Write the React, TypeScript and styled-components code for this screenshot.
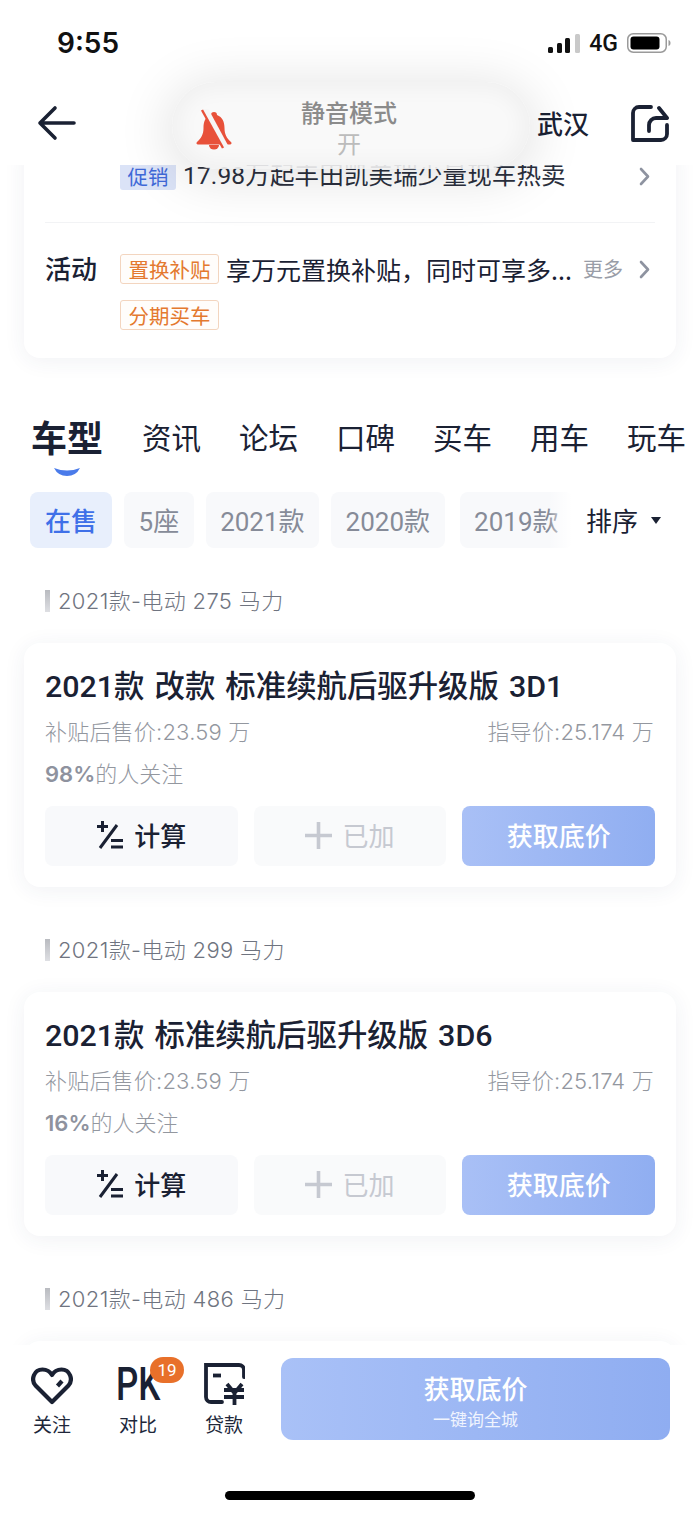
import React from "react";
import styled, { createGlobalStyle } from "styled-components";

const CJK = `"Noto Sans CJK SC", sans-serif`;
const LATIN = `Roboto, "Noto Sans CJK SC", sans-serif`;
const INTER = `Inter, "Noto Sans CJK SC", sans-serif`;
const INK = "#1a2133";

const Global = createGlobalStyle`
  * { box-sizing: border-box; }
  html, body { margin: 0; padding: 0; background: #fff; }
  body { font-family: ${CJK}; color: ${INK}; }
`;

const Page = styled.div`
  position: relative;
  width: 700px;
  height: 1515px;
  display: flex;
  flex-direction: column;
  overflow: hidden;
  background: #fff;
`;

const Header = styled.header`
  flex: none;
  height: 165px;
  background: #fff;
  position: relative;
  z-index: 2;
`;

const StatusBar = styled.div`
  height: 86px;
  display: flex;
  align-items: center;
  justify-content: space-between;
  padding: 0 29px 0 57px;
`;

const Time = styled.span`
  font: 600 28px/1 ${INTER};
  color: #111;
`;

const StatusRight = styled.div`
  display: flex;
  align-items: center;
  gap: 9px;
`;

const Carrier = styled.span`
  font: 500 23px/1 ${LATIN};
  color: #111;
`;

const NavBar = styled.nav`
  height: 74px;
  display: flex;
  align-items: center;
  padding: 0 31px 0 37px;
`;

const City = styled.span`
  margin-left: auto;
  margin-right: 42px;
  font: 500 26px/1 ${CJK};
`;

const Toast = styled.div`
  position: absolute;
  z-index: 5;
  left: 172px;
  top: 82px;
  width: 358px;
  height: 87px;
  border-radius: 44px;
  background: rgba(248, 248, 248, 0.9);
  box-shadow: 0 6px 50px 8px rgba(0, 0, 0, 0.1), inset 0 0 20px 8px rgba(0, 0, 0, 0.035);
  display: flex;
  align-items: center;
`;

const ToastBell = styled.span`
  display: flex;
  margin-left: 24px;
  margin-top: 8px;
`;

const ToastText = styled.div`
  flex: 1;
  margin-left: 3px;
  margin-right: 67px;
  text-align: center;
`;

const ToastTitle = styled.div`
  font: 500 24px/32px ${CJK};
  color: #8b8b8b;
  margin-top: 2px;
`;

const ToastState = styled.div`
  font: 400 24px/30px ${CJK};
  color: #bcbcbc;
`;

const Scroller = styled.main`
  flex: 1;
  min-height: 0;
  overflow: hidden;
`;

const Card = styled.section`
  margin: 0 24px;
  background: #fff;
  border-radius: 16px;
  box-shadow: 0 3px 22px rgba(40, 60, 100, 0.07);
  padding: 0 21px;
`;

const InfoCard = styled(Card)`
  margin-top: -30px;
  padding-top: 27px;
  padding-bottom: 28px;
`;

const PromoRow = styled.div`
  display: flex;
  align-items: center;
  height: 28px;
  padding-left: 75px;
  padding-right: 5px;
`;

const Tag = styled.span<{ $tone: "blue" | "orange" }>`
  flex: none;
  display: inline-flex;
  align-items: center;
  justify-content: center;
  border-radius: 3px;
  font: 400 20.5px/1 ${CJK};
  ${(p) =>
    p.$tone === "blue"
      ? `width: 56px; height: 28px; background: #dbe3f7; color: #4069d8;`
      : `width: 99px; height: 30px; background: #fffdfb; color: #e4792f; border: 1px solid #f3d5bf;`}
`;

const PromoText = styled.span`
  margin-left: 7px;
  font: 400 24.5px/28px ${LATIN};
  letter-spacing: 0.15px;
  color: #2a2f3d;
  white-space: nowrap;
`;

const Chevron = styled.span`
  flex: none;
  margin-left: auto;
  display: flex;
`;

const Divider = styled.div`
  height: 1px;
  background: #f2f3f5;
  margin: 32px 0 31px;
`;

const ActivityRow = styled.div`
  display: flex;
`;

const RowLabel = styled.span`
  flex: none;
  width: 75px;
  margin-top: -1px;
  font: 500 26px/30px ${CJK};
`;

const ActivityBody = styled.div`
  flex: 1;
  min-width: 0;
  display: flex;
  flex-direction: column;
  gap: 16px;
`;

const ActivityLine = styled.div`
  display: flex;
  align-items: center;
  padding-right: 5px;
`;

const ActivityText = styled.span`
  width: 345px;
  margin-left: 7px;
  flex: none;
  font: 400 25px/30px ${CJK};
  white-space: nowrap;
  margin-top: -1px;
`;

const More = styled.span`
  margin-left: 12px;
  font: 400 20px/1 ${CJK};
  color: #999da7;
`;

const Tabs = styled.div`
  margin-top: 48px;
  height: 60px;
  padding-left: 31px;
  display: flex;
  align-items: center;
  gap: 38px;
  white-space: nowrap;
`;

const Tab = styled.span<{ $active?: boolean }>`
  position: relative;
  flex: none;
  color: ${INK};
  margin-right: ${(p) => (p.$active ? 1 : 0)}px;
  font: ${(p) => (p.$active ? `700 36px/44px ${CJK}` : `400 29.5px/44px ${CJK}`)};
`;

const TabMark = styled.svg`
  position: absolute;
  left: 23px;
  top: 51px;
`;

const ChipRow = styled.div`
  margin-top: 26px;
  padding-left: 30px;
  display: flex;
  align-items: center;
`;

const ChipScroller = styled.div`
  position: relative;
  width: 542px;
  display: flex;
  gap: 12px;
  overflow: hidden;
  &::after {
    content: "";
    position: absolute;
    right: 0;
    top: 0;
    bottom: 0;
    width: 24px;
    background: linear-gradient(90deg, rgba(255, 255, 255, 0), #fff);
  }
`;

const Chip = styled.span<{ $active?: boolean }>`
  flex: none;
  height: 56px;
  padding: 3px ${(p) => (p.$active ? 15 : 14.5)}px 0;
  border-radius: 8px;
  display: flex;
  align-items: center;
  background: ${(p) => (p.$active ? "#e8effc" : "#f8f9fb")};
  color: ${(p) => (p.$active ? "#3f70e8" : "#868b98")};
  font: ${(p) => (p.$active ? 500 : 400)} 26px/1 ${LATIN};
  &:last-child {
    margin-left: 3px;
  }
`;

const Sort = styled.div`
  margin-left: 14px;
  display: flex;
  align-items: center;
  font: 400 26px/1 ${CJK};
`;

const SortCaret = styled.i`
  margin-left: 13px;
  width: 0;
  height: 0;
  border-left: 5.5px solid transparent;
  border-right: 5.5px solid transparent;
  border-top: 7px solid ${INK};
`;

const GroupHeading = styled.h3<{ $first?: boolean }>`
  margin: ${(p) => (p.$first ? 42 : 52)}px 45px 31px;
  height: 22px;
  display: flex;
  align-items: center;
  font: 300 22px/24px ${INTER};
  letter-spacing: 0.35px;
  color: #6f7480;
  &::before {
    content: "";
    width: 5px;
    height: 22px;
    margin-right: 8px;
    background: linear-gradient(180deg, #b9bbc0, #dedfe3);
  }
`;

const ModelCard = styled(Card)`
  height: 244px;
  padding-top: 24px;
`;

const ModelTitle = styled.div`
  font: 500 30.4px/40px ${LATIN};
  word-spacing: 2.5px;
  color: ${INK};
  white-space: nowrap;
`;

const PriceRow = styled.div`
  margin-top: 11px;
  height: 28px;
  display: flex;
  justify-content: space-between;
  align-items: center;
  padding-right: 1px;
  font: 300 22px/28px ${INTER};
  letter-spacing: 0.2px;
  color: #93979f;
`;

const Attention = styled.div`
  margin-top: 14px;
  font: 300 22px/28px ${INTER};
  color: #93979f;
  b {
    font-weight: 600;
    color: #8e929e;
  }
`;

const Actions = styled.div`
  margin-top: 18px;
  display: grid;
  grid-template-columns: repeat(3, 1fr);
  gap: 16px;
`;

const ActionButton = styled.button<{ $kind: "plain" | "off" | "primary" }>`
  height: 60px;
  border: 0;
  padding: 0 0 2px;
  border-radius: 8px;
  display: flex;
  align-items: center;
  justify-content: center;
  gap: 10px;
  font: 500 26px/1 ${CJK};
  ${(p) =>
    p.$kind === "plain"
      ? `background: #f8f9fb; color: ${INK};`
      : p.$kind === "off"
      ? `background: #f9fafb; color: #c6c9d1; font-weight: 400;`
      : `background: linear-gradient(90deg, #a9c0f6, #90aef1); color: #fff;`}
`;

const BottomBar = styled.footer`
  flex: none;
  height: 170px;
  background: #fff;
  position: relative;
  z-index: 2;
  padding: 13px 30px 0 9px;
  display: flex;
  align-items: flex-start;
`;

const BarItem = styled.div`
  position: relative;
  width: 86px;
  display: flex;
  flex-direction: column;
  align-items: center;
`;

const BarIcon = styled.div`
  height: 47px;
  display: flex;
  align-items: flex-end;
  justify-content: center;
`;

const BarLabel = styled.span`
  margin-top: 6px;
  font: 400 19px/26px ${CJK};
  color: #20273a;
`;

const PkMark = styled.span`
  display: block;
  font: 500 46px/41px Roboto, sans-serif;
  color: ${INK};
  transform: scaleX(0.76);
`;

const Badge = styled.span`
  position: absolute;
  left: 55px;
  top: -1px;
  width: 34px;
  height: 26px;
  border-radius: 13px;
  background: #e8702a;
  color: #fff;
  font: 400 17px/26px ${LATIN};
  text-align: center;
`;

const Cta = styled.button`
  margin-left: 14px;
  flex: 1;
  height: 82px;
  border: 0;
  padding: 3px 0 0;
  border-radius: 12px;
  background: linear-gradient(90deg, #a9c1f7, #8fadf1);
  color: #fff;
  display: flex;
  flex-direction: column;
  align-items: center;
  justify-content: center;
  font-family: ${CJK};
`;

const CtaTitle = styled.span`
  font: 500 26px/34px ${CJK};
`;

const CtaSub = styled.span`
  margin-top: 2px;
  font: 400 17px/24px ${CJK};
  color: #f0f4fe;
`;

const HomeBar = styled.div`
  position: absolute;
  z-index: 3;
  left: 225px;
  bottom: 15px;
  width: 250px;
  height: 9px;
  border-radius: 5px;
  background: #000;
`;

const Signal = () => (
  <svg width="32" height="19" viewBox="0 0 32 19">
    <rect x="0" y="13" width="5" height="6" rx="1.5" fill="#111" />
    <rect x="9" y="9" width="5" height="10" rx="1.5" fill="#111" />
    <rect x="17" y="4" width="5" height="15" rx="1.5" fill="#111" />
    <rect x="27" y="0" width="5" height="19" rx="1.5" fill="#c9c9c9" />
  </svg>
);

const Battery = () => (
  <svg width="44" height="20" viewBox="0 0 44 20">
    <rect x="0.75" y="0.75" width="38.5" height="18.5" rx="5.5" fill="none" stroke="#9a9a9a" strokeWidth="1.5" />
    <rect x="3.5" y="3.5" width="29" height="13" rx="3" fill="#000" />
    <path d="M41.5 7c1.5.5 2 1.5 2 3s-.5 2.5-2 3z" fill="#9a9a9a" />
  </svg>
);

const BackIcon = () => (
  <svg width="40" height="36" viewBox="0 0 40 36" fill="none" stroke={INK} strokeWidth="3.6" strokeLinecap="round" strokeLinejoin="round">
    <path d="M37 18H3M18 3 3 18l15 15" />
  </svg>
);

const ShareIcon = () => (
  <svg width="38" height="38" viewBox="0 0 38 38" fill="none" stroke={INK} strokeWidth="3.8" strokeLinecap="round" strokeLinejoin="round">
    <path d="M20 3H8a6 6 0 0 0-6 6v27h28a6 6 0 0 0 6-6V21" />
    <path d="M18 27v-6a7 7 0 0 1 7-7h11M28 4l8 10" />
  </svg>
);

const BellIcon = () => (
  <svg width="36" height="42" viewBox="0 0 36 42">
    <path d="M18 3c-2 0-3 1-3 3C9 8 7.500 13 7.500 19c0 6-2 10-6.500 14-1 1-.5 2.500 1 2.500h32c1.500 0 2-1.500 1-2.500-4.500-4-6.500-8-6.500-14 0-6-2-11-7.500-13 0-2-1-3-3-3z" fill="#e8513a" />
    <path d="M13 36a5 4.500 0 0 0 10 0z" fill="#e8513a" />
    <path d="M9 0 30 39" stroke="#f6f6f6" strokeWidth="6" />
    <path d="M6 1l21 38" stroke="#e8513a" strokeWidth="2.400" fill="none" />
  </svg>
);

const ChevronIcon = () => (
  <svg width="11" height="19" viewBox="0 0 11 19" fill="none" stroke="#8e93a0" strokeWidth="2.600" strokeLinecap="round" strokeLinejoin="round">
    <path d="M2 2l7 7.500L2 17" />
  </svg>
);

const CalcIcon = () => (
  <svg width="28" height="28" viewBox="0 0 28 28" fill="none" stroke={INK} strokeWidth="3">
    <path d="M1 5.500h11M6.500 0v11M21 4 4 27M15 19.500h12M15 26h12" />
  </svg>
);

const PlusIcon = () => (
  <svg width="27" height="27" viewBox="0 0 27 27" fill="none" stroke="#c6c9d1" strokeWidth="3.600">
    <path d="M0 13.500h27M13.500 0v27" />
  </svg>
);

const HeartIcon = () => (
  <svg width="42" height="38" viewBox="0 0 42 38" fill="none" stroke={INK} strokeWidth="4.200" strokeLinejoin="round" strokeLinecap="round">
    <path d="M21 35 4.500 18.500C-.5 12.500 3 2.500 11.500 2.500 15.500 2.500 19 4.500 21 8c2-3.500 5.500-5.500 9.500-5.500C39 2.500 42.500 12.500 37.500 18.500z" />
    <path d="M31 14l-4.500 5" strokeLinecap="butt" />
  </svg>
);

const LoanIcon = () => (
  <svg width="42" height="42" viewBox="0 0 42 42" fill="none" stroke={INK} strokeWidth="3.800">
    <path d="M41 14V7a5 5 0 0 0-5-5H3v32a5 5 0 0 0 5 5h11" strokeLinecap="round" />
    <path d="M10 12.500h8" />
    <path d="M24 21l7.500 9 7.500-9M21 27h20M21 34h20M31.500 28v14" />
  </svg>
);

const TabSmile = () => (
  <TabMark width="26" height="11" viewBox="0 0 26 11">
    <path d="M0 3Q13 8 26 3 22 11 13 11 4 11 0 3z" fill="#4a7bea" />
  </TabMark>
);

type Model = {
  group: string;
  name: string;
  attention: string;
};

const models: Model[] = [
  { group: "2021款-电动 275 马力", name: "2021款 改款 标准续航后驱升级版 3D1", attention: "98%" },
  { group: "2021款-电动 299 马力", name: "2021款 标准续航后驱升级版 3D6", attention: "16%" },
];

const ModelEntry = ({ model, first }: { model: Model; first: boolean }) => (
  <>
    <GroupHeading $first={first}>{model.group}</GroupHeading>
    <ModelCard>
      <ModelTitle>{model.name}</ModelTitle>
      <PriceRow>
        <span>补贴后售价:23.59 万</span>
        <span>指导价:25.174 万</span>
      </PriceRow>
      <Attention>
        <b>{model.attention}</b>的人关注
      </Attention>
      <Actions>
        <ActionButton $kind="plain">
          <CalcIcon />
          计算
        </ActionButton>
        <ActionButton $kind="off">
          <PlusIcon />
          已加
        </ActionButton>
        <ActionButton $kind="primary">获取底价</ActionButton>
      </Actions>
    </ModelCard>
  </>
);

export default function App() {
  return (
    <Page>
      <Global />
      <Header>
        <StatusBar>
          <Time>9:55</Time>
          <StatusRight>
            <Signal />
            <Carrier>4G</Carrier>
            <Battery />
          </StatusRight>
        </StatusBar>
        <NavBar>
          <BackIcon />
          <City>武汉</City>
          <ShareIcon />
        </NavBar>
      </Header>

      <Toast>
        <ToastBell>
          <BellIcon />
        </ToastBell>
        <ToastText>
          <ToastTitle>静音模式</ToastTitle>
          <ToastState>开</ToastState>
        </ToastText>
      </Toast>

      <Scroller>
        <InfoCard>
          <PromoRow>
            <Tag $tone="blue">促销</Tag>
            <PromoText>17.98万起丰田凯美瑞少量现车热卖</PromoText>
            <Chevron>
              <ChevronIcon />
            </Chevron>
          </PromoRow>
          <Divider />
          <ActivityRow>
            <RowLabel>活动</RowLabel>
            <ActivityBody>
              <ActivityLine>
                <Tag $tone="orange">置换补贴</Tag>
                <ActivityText>享万元置换补贴，同时可享多...</ActivityText>
                <More>更多</More>
                <Chevron>
                  <ChevronIcon />
                </Chevron>
              </ActivityLine>
              <ActivityLine>
                <Tag $tone="orange">分期买车</Tag>
              </ActivityLine>
            </ActivityBody>
          </ActivityRow>
        </InfoCard>

        <Tabs>
          <Tab $active>
            车型
            <TabSmile />
          </Tab>
          {["资讯", "论坛", "口碑", "买车", "用车", "玩车"].map((t) => (
            <Tab key={t}>{t}</Tab>
          ))}
        </Tabs>

        <ChipRow>
          <ChipScroller>
            <Chip $active>在售</Chip>
            {["5座", "2021款", "2020款", "2019款"].map((c) => (
              <Chip key={c}>{c}</Chip>
            ))}
          </ChipScroller>
          <Sort>
            排序
            <SortCaret />
          </Sort>
        </ChipRow>

        {models.map((m, i) => (
          <ModelEntry key={m.group} model={m} first={i === 0} />
        ))}
        <GroupHeading>2021款-电动 486 马力</GroupHeading>
        <ModelCard />
      </Scroller>

      <BottomBar>
        <BarItem>
          <BarIcon>
            <HeartIcon />
          </BarIcon>
          <BarLabel>关注</BarLabel>
        </BarItem>
        <BarItem>
          <BarIcon>
            <PkMark>PK</PkMark>
          </BarIcon>
          <Badge>19</Badge>
          <BarLabel>对比</BarLabel>
        </BarItem>
        <BarItem>
          <BarIcon>
            <LoanIcon />
          </BarIcon>
          <BarLabel>贷款</BarLabel>
        </BarItem>
        <Cta>
          <CtaTitle>获取底价</CtaTitle>
          <CtaSub>一键询全城</CtaSub>
        </Cta>
      </BottomBar>
      <HomeBar />
    </Page>
  );
}
